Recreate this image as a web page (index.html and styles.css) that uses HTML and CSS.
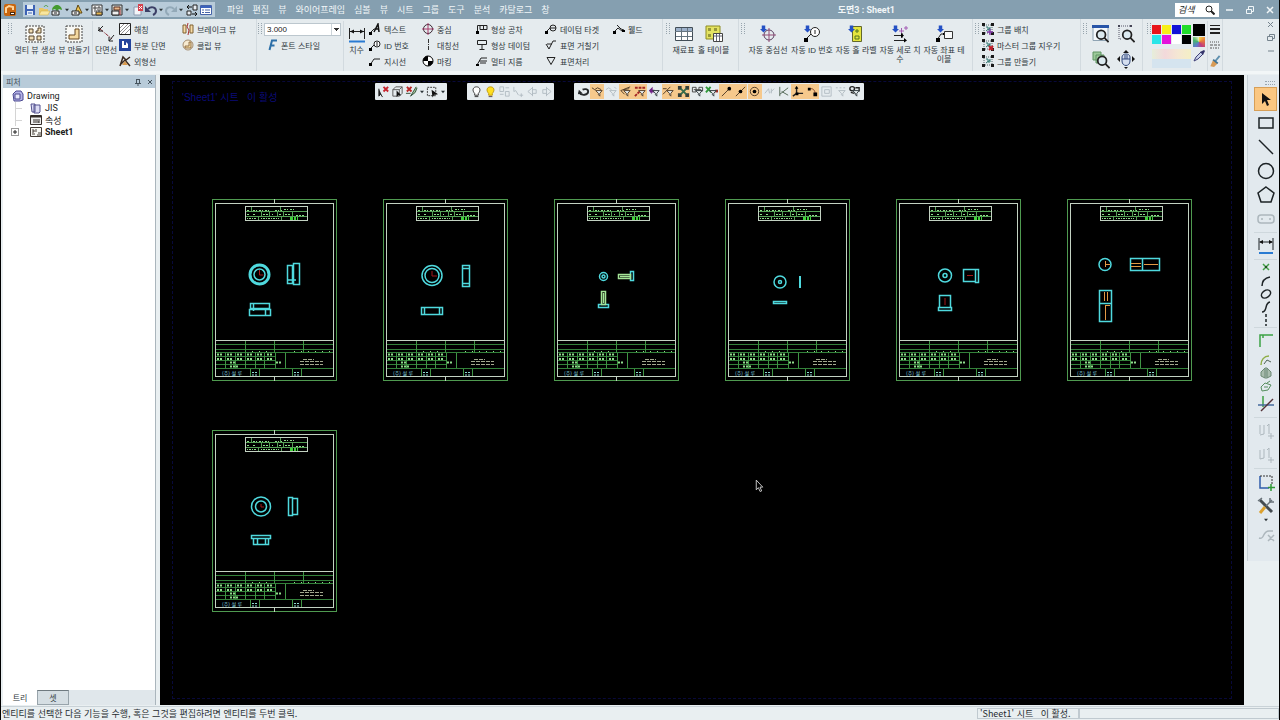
FILE: index.html
```html
<!DOCTYPE html>
<html lang="ko">
<head>
    <meta charset="UTF-8">
    <meta name="viewport" content="width=device-width, initial-scale=1.0">
    <title>도면3 : Sheet1</title>
    <link rel="stylesheet" href="styles.css">
</head>
<body>

<!-- Shared symbols -->
<svg class="defs" aria-hidden="true">
    <symbol id="frame" viewBox="0 0 125 182">
        <g fill="none" stroke="#4f9a50">
            <rect x=".5" y=".5" width="124" height="181"/>
            <path d="M4 145.500H121M4 150.500H121M4 153.500H121M4 157.500H63M4 161.500H63M4 165.500H63M4 169.500H121" stroke="#33813a"/>
            <path d="M33.500 142V154M62.500 142V154M91.500 142V154M13.500 154V169M23.500 154V169M33.500 154V169M43.500 154V169M52.500 154V169M63.500 154V169M73.500 154V169M38.500 170V177M47.500 170V177M80.500 170V177M89.500 170V177" stroke="#3f9444"/>
            <path d="M34 12.500H95M34 17.500H95M39.500 8V12M68.500 8V12M49.500 13V17M57.500 13V17M65.500 13V17M71.500 13V17M80.500 13V17M46.500 18V21M69.500 18V21" stroke="#55a056"/>
        </g>
        <g fill="none" stroke="#c3d2c2">
            <rect x="3.500" y="4.500" width="118" height="173"/>
            <path d="M62.500 0V4M62.500 178V182M4 141.500H121"/>
            <rect x="33.500" y="7.500" width="62" height="14"/>
        </g>
        <g fill="none" stroke="#8fdc8c">
            <path d="M35 11.500H38M41 11.500H57M63 11.500H70M72 10.500H82" stroke-dasharray="2 1 1 2"/>
            <path d="M35 15.500H38M41 15.500H43M51 15.500H56M60 15.500H61M67 15.500H70M73 15.500H79M84 16.500H92" stroke-dasharray="2 1"/>
            <path d="M35 19.500H45M49 19.500H67" stroke-dasharray="1 1 2 1"/>
            <path d="M78 19.500H86" stroke="#3fd03a" stroke-width="3" stroke-dasharray="3 1 2 1"/>
            <path d="M5 155.500H61M5 160H61" stroke-dasharray="2 1 2 5" stroke-width="2"/>
            <path d="M18 163.500H24M18 167.500H26M64 163.500H70" stroke-dasharray="2 1" stroke-width="2"/>
            <path d="M40 152.500H60M82 152.500H118" stroke-dasharray="1 6"/>
            <path d="M91 160.500H102M88 162.500H111M88 165.500H111" stroke="#a2a88e" stroke-dasharray="4 1"/>
            <path d="M40 173.500H45M40 176H45M82 173.500H87M82 176H87" stroke="#8edcd4" stroke-dasharray="2 1"/>
        </g>
    </symbol>
    <symbol id="funnel" viewBox="0 0 14 14"><path d="M5 6h7L9.500 9v3L8 10.500V9z" fill="#e8eef0" stroke="currentColor"/></symbol>
    <symbol id="group" viewBox="0 0 12 12">
        <path d="M2 2h8v8H2z" fill="none" stroke="#55666c" stroke-dasharray="1 1"/>
        <path d="M0 0h3v3H0zM9 0h3v3H9zM0 9h3v3H0zM9 9h3v3H9z" fill="#1a1a1a"/>
        <path d="M4 4h2v3h2V4M4 8l4-3" fill="none" stroke="#2f7670"/>
    </symbol>
    <symbol id="bluearrow" viewBox="0 0 8 8"><path d="M2 0h4v4h2L4 8 0 4h2z" fill="#2450c4"/></symbol>
    <symbol id="lens" viewBox="0 0 16 16"><circle cx="7" cy="7" r="5" fill="#dceaf0" stroke="#222" stroke-width="2"/><path d="M10.500 10.500l5 5" stroke="#222" stroke-width="2"/></symbol>
    <symbol id="caret" viewBox="0 0 5 5"><path d="M0 1h5L2.500 4z" fill="#2c3438"/></symbol>
</svg>

<div class="app">
    <header class="titlebar">
        <svg class="logo" viewBox="0 0 12 12"><rect width="12" height="12" rx="2" fill="#c9660f"/><path d="M2 9V4l3-2 4 1v3" fill="none" stroke="#ffd59a" stroke-width="2"/><path d="M6 8h5v3H6z" fill="#4a2a10"/><path d="M7 9.500h3" stroke="#fff"/></svg>
        <div class="quick">
            <button aria-label="저장"><svg viewBox="0 0 12 12"><path d="M1 1h10v10H1z" fill="#3d62b4"/><path d="M3 1h6v4H3zM3 7h6v4H3z" fill="#e5eef8"/><path d="M4 9h4" stroke="#3d62b4"/></svg></button>
            <button aria-label="열기"><svg viewBox="0 0 12 12"><path d="M1 11V4h4l1 1h4v6z" fill="#e9c766"/><path d="M1 11l2-4h9l-2 4z" fill="#f7e6a0" stroke="#c8a43e" stroke-width=".5"/><path d="M6 3c1-2 3-2 4 0" fill="none" stroke="#4a9c43"/></svg></button>
            <button class="drop" aria-label="파트"><svg viewBox="0 0 12 12"><path d="M1 6c0-3 3-5 5-5s5 2 5 5l-3-1-2 2-2-2z" fill="#459b30"/><path d="M1 7h7v4H1z" fill="#eee" stroke="#222"/><path d="M3 9h3" stroke="#222"/></svg><svg class="caret"><use href="#caret"/></svg></button>
            <button class="drop" aria-label="어셈블리"><svg viewBox="0 0 12 12"><path d="M7 1l4 8H4z" fill="#f1c651" stroke="#5d4510"/><path d="M1 7h7v4H1z" fill="#eee" stroke="#222"/><path d="M3 9h3" stroke="#222"/></svg><svg class="caret"><use href="#caret"/></svg></button>
            <button class="drop" aria-label="도면"><svg viewBox="0 0 12 12"><path d="M1 1h10v10H1z" fill="#f6f6f6" stroke="#333"/><path d="M3 3h2v2H3zM7 3h2v4H7zM3 7h3" fill="none" stroke="#444"/><path d="M5 8h6v3H5z" fill="#e7b64e" stroke="#333"/></svg><svg class="caret"><use href="#caret"/></svg></button>
            <button class="drop" aria-label="시트"><svg viewBox="0 0 12 12"><path d="M1 1h10v10H1z" fill="#cfd4d2" stroke="#333"/><path d="M3 3h6v3H3z" fill="#e8b98a" stroke="#603020"/><path d="M1 7h7v4H1z" fill="#eee" stroke="#222"/><path d="M9 6v5" stroke="#a33"/></svg><svg class="caret"><use href="#caret"/></svg></button>
            <button aria-label="삭제"><svg viewBox="0 0 12 12"><path d="M2 3h7v8H2z" fill="#f2f4f8" stroke="#8c9ab0"/><path d="M6 0h5v7H6z" fill="#d4424e"/><path d="M7 2l3 3M10 2L7 5" stroke="#fff"/></svg></button>
            <button class="drop" aria-label="실행 취소"><svg viewBox="0 0 12 12"><path d="M3 5c3-3 8-2 8 2 0 2-1 3-3 4" fill="none" stroke="#3c3f66" stroke-width="2"/><path d="M0 2v6h6z" fill="#3c3f66"/></svg><svg class="caret"><use href="#caret"/></svg></button>
            <button class="drop" aria-label="다시 실행"><svg viewBox="0 0 12 12"><path d="M9 5C6 2 1 3 1 7c0 2 1 3 3 4" fill="none" stroke="#93a9b8" stroke-width="2"/><path d="M12 2v6H6z" fill="#93a9b8"/></svg><svg class="caret"><use href="#caret"/></svg></button>
            <button aria-label="전환"><svg viewBox="0 0 12 12"><path d="M1 3h5M3 1L1 3l2 2M6 10h5M9 8l2 2-2 2" fill="none" stroke="#111" stroke-width="1"/><path d="M7 1h4v5H7zM1 7h4v4H1z" fill="#e8edf2" stroke="#222"/></svg></button>
            <button aria-label="창 목록"><svg viewBox="0 0 12 12"><path d="M.500 1.500h11v9H.500z" fill="#fff" stroke="#4563a8"/><path d="M1 2h10v2H1z" fill="#3b62bd"/><path d="M2 6h2M5 6h5M2 8.500h2M5 8.500h5" stroke="#4563a8"/></svg></button>
        </div>
        <nav class="menu">
            <a href="#">파일</a><a href="#">편집</a><a href="#">뷰</a><a href="#">와이어프레임</a><a href="#">심볼</a><a href="#">뷰</a><a href="#">시트</a><a href="#">그룹</a><a href="#">도구</a><a href="#">분석</a><a href="#">카탈로그</a><a href="#">창</a>
        </nav>
        <h1 class="title">도면3 : Sheet1</h1>
        <div class="search">
            <input type="text" placeholder="검색" aria-label="검색">
            <svg viewBox="0 0 10 10"><circle cx="4" cy="4" r="3" fill="none" stroke="#222"/><path d="M6 6l3.500 3.500" stroke="#222" stroke-width="2"/></svg>
        </div>
        <div class="wincontrols">
            <button aria-label="최소화"><svg viewBox="0 0 10 10"><path d="M1 5h7" stroke="currentColor" stroke-width="1.500"/></svg></button>
            <button aria-label="이전 크기로"><svg viewBox="0 0 10 10"><path d="M1.500 4.500h5v4h-5zM3.500 4V1.500h5v5H7" fill="none" stroke="currentColor"/></svg></button>
            <button aria-label="닫기"><svg viewBox="0 0 10 10"><path d="M2 2l6 6M8 2L2 8" stroke="currentColor" stroke-width="1.500"/></svg></button>
        </div>
    </header>

    <div class="ribbon">
        <section class="group views">
            <i class="grip"></i>
            <button class="big"><svg viewBox="0 0 20 18"><path d="M1 1h18v16H1z" fill="#f8f8f4" stroke="#444" stroke-dasharray="2 1"/><path d="M4 4h4v4H4zM13 3h3v5h-5V6h2zM4 11h5v4H4zM12 11h4v4h-4z" fill="#f2dfb5" stroke="#54432c"/></svg><span>멀티 뷰 생성</span></button>
            <button class="big"><svg viewBox="0 0 20 18"><path d="M2 1h16v16H2z" fill="#f8f8f4" stroke="#444" stroke-dasharray="2 1"/><path d="M11 4h4v10H5v-4h6z" fill="#f4d9a0" stroke="#6b4a22"/></svg><span>뷰 만들기</span></button>
            <button class="big line"><svg viewBox="0 0 20 18"><path d="M4 4l12 10" stroke="#8a2c35" stroke-dasharray="4 1 1 1"/><path d="M7 1L2 6M3 2v4h4M18 10l-5 6M13 12v4h4" fill="none" stroke="#222"/></svg><span>단면선</span></button>
            <div class="col">
                <button class="row"><svg viewBox="0 0 12 12"><path d="M.500.500h11v11H.500z" fill="#fff" stroke="#222"/><path d="M1 5l4-4M1 9l8-8M2 11l9-9M6 11l5-5" stroke="#666" stroke-width=".7"/></svg>해칭</button>
                <button class="row"><svg viewBox="0 0 12 12"><path d="M0 0h12v12H0z" fill="#23439c"/><path d="M3 2v7h6V5L7 3v3H5V2z" fill="#fff"/></svg>부분 단면</button>
                <button class="row"><svg viewBox="0 0 12 12"><path d="M1 11L4 2l3 3 4-3M2 9l4-4 5 6" fill="none" stroke="#3a2a20" stroke-width="1.500"/><path d="M3 10l3-4 3 4" fill="#d89a4e"/></svg>외형선</button>
            </div>
            <div class="col">
                <button class="row"><svg viewBox="0 0 12 12"><path d="M1 2h3v8H1zM8 2h3v8H8z" fill="#f6dba8" stroke="#7e6030"/><path d="M6 0L5 4l2 3-1 5" fill="none" stroke="#a33"/></svg>브레이크 뷰</button>
                <button class="row"><svg viewBox="0 0 12 12"><circle cx="6" cy="6" r="5" fill="#f7ead0" stroke="#a38c70"/><path d="M7 3h2v6H3V7h4z" fill="#f4d9a0" stroke="#7d5b35" stroke-width=".8"/></svg>클립 뷰</button>
            </div>
        </section>

        <section class="group notes">
            <i class="grip"></i>
            <div class="col fontcol">
                <select aria-label="문자 높이"><option>3.000</option></select>
                <button class="row"><svg viewBox="0 0 12 12"><path d="M3.500 11L6 1.500h5M4.500 6.500h4" fill="none" stroke="#2c6fa8" stroke-width="2"/></svg>폰트 스타일</button>
            </div>
            <button class="big line"><svg viewBox="0 0 18 18"><path d="M1.500 3v11M16.500 3v11M2 6.500h14" stroke="#222"/><path d="M2 6.500l4-2v4zM16 6.500l-4-2v4z" fill="#111"/><path d="M1 16.500h16" stroke="#2a7bd2" stroke-width="2"/></svg><span>치수</span></button>
            <div class="col">
                <button class="row"><svg viewBox="0 0 12 12"><path d="M1 10l4-4h1" fill="none" stroke="#222"/><path d="M0 9h3v3H0z"/><path d="M5 9l4-8 1 8M6 6h4" fill="none" stroke="#111" stroke-width="1.500"/></svg>텍스트</button>
                <button class="row"><svg viewBox="0 0 12 12"><path d="M1 10l4-4" stroke="#222"/><path d="M0 9h3v3H0z"/><circle cx="8" cy="5" r="3" fill="#fff" stroke="#222"/><path d="M8 3v4" stroke="#222"/></svg>ID 번호</button>
                <button class="row"><svg viewBox="0 0 12 12"><path d="M1 10l4-6h6" fill="none" stroke="#222"/><path d="M0 8h3v3H0z"/></svg>지시선</button>
            </div>
            <div class="col">
                <button class="row"><svg viewBox="0 0 12 12"><circle cx="6" cy="6" r="4.500" fill="none" stroke="#3a2531"/><path d="M6 0v12M0 6h12" stroke="#a83b6a"/></svg>중심</button>
                <button class="row"><svg viewBox="0 0 12 12"><path d="M6.500 0v12" stroke="#333" stroke-dasharray="4 1 1 1"/></svg>대칭선</button>
                <button class="row"><svg viewBox="0 0 12 12"><circle cx="6" cy="6" r="5" fill="#fff" stroke="#000"/><path d="M6 1v10a5 5 0 0 0 5-5H1a5 5 0 0 1 5-5"/></svg>마킹</button>
            </div>
            <div class="col">
                <button class="row"><svg viewBox="0 0 12 12"><path d="M1.500 10V2.500H11v4H4v-4M7.500 3v3" fill="none" stroke="#222"/><path d="M0 8h3v3H0z"/></svg>형상 공차</button>
                <button class="row"><svg viewBox="0 0 12 12"><path d="M1.500 1.500h9v4h-9zM6 6v4M3.500 10.500h5" fill="none" stroke="#222"/></svg>형상 데이텀</button>
                <button class="row"><svg viewBox="0 0 12 12"><path d="M1 10l4-7h6M3 6h8M4 8h6" fill="none" stroke="#222"/><path d="M0 9h3v2H0z"/></svg>멀티 지름</button>
            </div>
            <div class="col">
                <button class="row"><svg viewBox="0 0 12 12"><path d="M1 9l4-4h6" fill="none" stroke="#222"/><circle cx="8" cy="5" r="3" fill="none" stroke="#222"/><path d="M0 8h3v3H0z"/></svg>데이텀 타겟</button>
                <button class="row"><svg viewBox="0 0 12 12"><path d="M1 5l3 5 4-8h3M2 5h5" fill="none" stroke="#222"/></svg>표면 거칠기</button>
                <button class="row"><svg viewBox="0 0 12 12"><path d="M2 2.500h8L6 9.500z" fill="none" stroke="#222"/></svg>표면처리</button>
            </div>
            <div class="col">
                <button class="row"><svg viewBox="0 0 12 12"><path d="M1 9l4-4 4 3M4 2l4 4 3 1" fill="none" stroke="#222"/><path d="M0 8h3v3H0zM9 7h3v2H9z"/></svg>웰드</button>
            </div>
        </section>

        <section class="group tables">
            <i class="grip"></i>
            <button class="big"><svg viewBox="0 0 20 18"><path d="M1.500 2.500h17v13h-17z" fill="#fff" stroke="#434e57"/><path d="M2 3h16v3H2z" fill="#9db1ca"/><path d="M1 6.500h18M7.500 3v12M13.500 3v12M2 11.500h16" stroke="#667580"/></svg><span>재료표</span></button>
            <button class="big"><svg viewBox="0 0 20 18"><path d="M2 1h14v13H2z" fill="#e4e362" stroke="#8d8b22"/><path d="M4 3h3v3H4zM10 3h3v3h-3zM4 9h3v3H4z" fill="#98983a"/><path d="M9.500 8.500h9v8h-9z" fill="#fff" stroke="#444"/><path d="M10 11h8M12.500 9v7M15.500 9v7" stroke="#667"/></svg><span>홀 테이블</span></button>
        </section>

        <section class="group auto">
            <i class="grip"></i>
            <button class="big"><svg viewBox="0 0 20 18"><circle cx="11" cy="10" r="5" fill="none" stroke="#5a3d60"/><path d="M11 3v14M4 10h14" stroke="#934a75"/><use href="#bluearrow" x="2" y="0" width="7" height="8"/></svg><span>자동 중심선</span></button>
            <button class="big"><svg viewBox="0 0 20 18"><path d="M3 15l6-6" stroke="#222"/><path d="M2 13h4v4H2z"/><circle cx="13" cy="7" r="4.500" fill="#fff" stroke="#222"/><path d="M13 5v4" stroke="#222"/><use href="#bluearrow" x="2" y="0" width="7" height="8"/></svg><span>자동 ID 번호</span></button>
            <button class="big"><svg viewBox="0 0 20 18"><path d="M6.500 1.500h9v15h-9z" fill="#e5e53e" stroke="#62682c"/><path d="M9 6h4M11 4v4M9 11h4v3H9z" fill="none" stroke="#53751f"/><use href="#bluearrow" x="2" y="0" width="7" height="8"/></svg><span>자동 홀 라벨</span></button>
            <button class="big"><svg viewBox="0 0 20 18"><path d="M4 10.500h8M4 15.500h12M12 8v5" stroke="#222"/><path d="M11 8l3 2.500-3 2.500zM14 13l3 2.500-3 2z"/><path d="M9 6h5M11.500 3v5M14 3h4M16 1v4" stroke="#a35ab4"/><use href="#bluearrow" x="2" y="0" width="7" height="8"/></svg><span>자동 세로 치수</span></button>
            <button class="big"><svg viewBox="0 0 20 18"><path d="M3 15l4-6h3" fill="none" stroke="#222"/><path d="M2 13h4v4H2zM9 8h2v2H9z"/><path d="M10.500 6.500h8v7h-8z" fill="#f8fafa" stroke="#333"/><use href="#bluearrow" x="3" y="0" width="7" height="8"/></svg><span>자동 좌표 테이블</span></button>
        </section>

        <section class="group grouping">
            <i class="grip"></i>
            <div class="col">
                <button class="row"><svg viewBox="0 0 12 12"><use href="#group"/><path d="M8 6v6M5 9h6" stroke="#8238a8" stroke-width="1.500"/></svg>그룹 배치</button>
                <button class="row"><svg viewBox="0 0 12 12"><use href="#group"/><path d="M7 7l4 4M11 7l-4 4" stroke="#c11e2a" stroke-width="2"/></svg>마스터 그룹 지우기</button>
                <button class="row"><svg viewBox="0 0 12 12"><use href="#group"/></svg>그룹 만들기</button>
            </div>
        </section>

        <section class="group zooming">
            <i class="grip"></i>
            <div class="zooms">
                <button aria-label="전체 보기"><svg viewBox="0 0 18 20"><path d="M1 2.500h15v14H1z" fill="#f4f8fb" stroke="#90a4b4"/><path d="M0 1h17v3H0z" fill="#2855a8"/><use href="#lens" x="3" y="4" width="14" height="15"/></svg></button>
                <button aria-label="영역 확대"><svg viewBox="0 0 18 20"><path d="M2 2h12M2 2v13h3" fill="none" stroke="#556" stroke-dasharray="1 1"/><path d="M1 1h2v2H1zM13 1h2v2h-2z" fill="#445"/><use href="#lens" x="4" y="4" width="14" height="15"/></svg></button>
                <button aria-label="선택 확대"><svg viewBox="0 0 18 20"><path d="M1 3h8v8H1zM4 6h8v8H4z" fill="#9cc99a" stroke="#5e9463"/><use href="#lens" x="4" y="5" width="14" height="15"/></svg></button>
                <button aria-label="화면 이동"><svg viewBox="0 0 18 20"><path d="M9 1l3 3H6zM0 10l3-3v6zM18 10l-3-3v6zM9 20l2-2H7z" fill="#151515"/><path d="M5 8c0-4 8-4 8 0v4c0 6-8 6-8 0z" fill="#d4deef" stroke="#31497c"/><path d="M5 10h8M8 6v4M10 6v4" stroke="#31497c"/></svg></button>
            </div>
        </section>

        <section class="group colors">
            <i class="grip"></i>
            <div class="swatches">
                <button class="red" aria-label="빨강"></button><button class="yellow" aria-label="노랑"></button><button class="blue" aria-label="파랑"></button><button class="green" aria-label="초록"></button>
                <button class="cyan" aria-label="하늘"></button><button class="magenta" aria-label="자홍"></button><button class="white" aria-label="흰색"></button><button class="black" aria-label="검정"></button>
                <span class="faded"></span>
            </div>
            <div class="current">
                <button class="black" aria-label="현재 색"></button>
                <button class="spectrum" aria-label="색 선택"></button>
                <button aria-label="색 추출"><svg viewBox="0 0 12 14"><path d="M1 12l2-4 5-5 2 2-5 5z" fill="#c9d3ea" stroke="#3f3f78"/><path d="M7 3l3 3 2-4-1-1z" fill="#35356b"/></svg></button>
            </div>
            <div class="strokes">
                <button aria-label="선 굵기"><svg viewBox="0 0 12 12"><path d="M1 2h10" stroke="#222"/><path d="M1 5.500h10" stroke="#222" stroke-width="2"/><path d="M1 9.500h10" stroke="#222" stroke-width="2"/></svg></button>
                <button aria-label="선 종류"><svg viewBox="0 0 12 12"><path d="M1 2.500h10" stroke="#555" stroke-dasharray="1 1"/><path d="M1 5.500h10" stroke="#555" stroke-dasharray="3 1"/><path d="M1 8.500h10" stroke="#555" stroke-dasharray="2 1 1 1"/></svg></button>
                <button aria-label="서식 복사"><svg viewBox="0 0 12 14"><path d="M11 1L6 7" stroke="#5d8fae" stroke-width="2"/><path d="M4 5l5 4-4 4-4-1z" fill="#d79b56"/><path d="M4 5l5 4" stroke="#3e7396" stroke-width="2"/></svg></button>
            </div>
        </section>

        <div class="mdi">
            <button aria-label="문서 닫기"><svg viewBox="0 0 10 10"><path d="M2 2l5 5M7 2L2 7" stroke="currentColor"/></svg></button>
            <button aria-label="문서 이전 크기로"><svg viewBox="0 0 10 10"><path d="M1.500 3.500h5v4h-5zM3.500 3V1.500h5v4H7" fill="none" stroke="currentColor"/></svg></button>
            <button aria-label="문서 최소화"><svg viewBox="0 0 10 10"><path d="M2 5h6" stroke="currentColor"/></svg></button>
        </div>
    </div>

    <main class="workspace">
        <aside class="panel">
            <div class="panel-head">
                <h2>피처</h2>
                <button aria-label="고정"><svg viewBox="0 0 8 8"><path d="M2.500 1v4M5.500 1v4M1 5.500h6M4 6v2M3 1.500h3" stroke="#46535d" fill="none"/></svg></button>
                <button aria-label="패널 닫기"><svg viewBox="0 0 8 8"><path d="M2 2l4 4M6 2L2 6" stroke="#46535d"/></svg></button>
            </div>
            <ul class="tree">
                <li class="root"><svg viewBox="0 0 12 12"><path d="M1 4l3-3h5l2 3v6l-3 1H2z" fill="#b3b1e4" stroke="#4b4990"/><path d="M3 4h5v5H3z" fill="#e8e8fa" stroke="#4b4990"/></svg>Drawing</li>
                <li class="child"><svg viewBox="0 0 12 12"><path d="M1 2h4v8H2zM4 3h6v7l-1 1H4z" fill="#dcdcf4" stroke="#53518e"/></svg>JIS</li>
                <li class="child"><svg viewBox="0 0 12 12"><path d="M.500 1.500h11v9H.500z" fill="#eee" stroke="#332c28"/><path d="M1 2.500h10" stroke="#332c28" stroke-width="2"/><path d="M3 6h5M3 8h6M9 5v4" stroke="#332c28"/></svg>속성</li>
                <li class="sheet"><button class="expand" aria-label="펼치기"><svg viewBox="0 0 6 6"><path d="M1 3h4M3 1v4" stroke="#222"/></svg></button><svg viewBox="0 0 12 12"><path d="M.500 1.500h11v9H.500z" fill="#f8f8f4" stroke="#443c36"/><path d="M2 4h2v2H2M6 3v3M2 8h3M7 9h4M8 7h3" fill="none" stroke="#443c36"/></svg>Sheet1</li>
            </ul>
            <div class="tabs"><button class="active">트리</button><button>셋</button></div>
        </aside>

        <section class="canvas">
            <p class="sheet-note">'Sheet1' 시트 &nbsp; 이 활성</p>
            <div class="floating">
                <div class="float">
                    <button aria-label="선택 해제"><svg viewBox="0 0 14 14"><path d="M2 4v8l2-2 2 3" fill="#222" stroke="#222"/><path d="M7 2l5 5M12 2L7 7" stroke="#c7242e" stroke-width="2"/></svg></button>
                    <button aria-label="솔리드"><svg viewBox="0 0 14 14"><path d="M2 5h7v7H2zM2 5l3-3h7v7l-3 3M9 5l3-3" fill="none" stroke="#555"/><path d="M6 6l5 5H8l-2 2z" fill="#111"/></svg></button>
                    <button class="drop" aria-label="선택 필터"><svg viewBox="0 0 14 14"><path d="M2 2l5 5M7 2L2 7" stroke="#b82525" stroke-width="2"/><path d="M12 2L6 12l5-4 2-5M1 9h5" fill="#a9c89e" stroke="#304e38"/></svg><svg class="caret"><use href="#caret"/></svg></button>
                    <button class="drop" aria-label="영역 선택"><svg viewBox="0 0 14 14"><path d="M1.500 2.500h9v9h-9z" fill="none" stroke="#333" stroke-dasharray="2 1"/><path d="M6 5l7 5-4 .500-2 3z" fill="#111"/></svg><svg class="caret"><use href="#caret"/></svg></button>
                </div>
                <div class="float lights">
                    <button aria-label="숨기기"><svg viewBox="0 0 14 14"><path d="M5 9C2 6 3 2 7 2s5 4 2 7v2H5z" fill="#fff" stroke="#333"/><path d="M5 12.500h4" stroke="#333"/></svg></button>
                    <button aria-label="표시"><svg viewBox="0 0 14 14"><path d="M5 9C2 6 3 2 7 2s5 4 2 7v2H5z" fill="#ffdf20" stroke="#bc9710"/><path d="M5 12.500h4" stroke="#544"/></svg></button>
                    <button class="off" aria-label="전환 표시"><svg viewBox="0 0 14 14"><path d="M2 2h4v5H2zM8 7h4v5H8zM8 3h4M2 10h4" fill="none" stroke="currentColor"/></svg></button>
                    <button class="off" aria-label="이동"><svg viewBox="0 0 14 14"><path d="M2 2v5l2-1 3 5M8 11h4M10 9v4" fill="none" stroke="currentColor"/></svg></button>
                    <button class="off" aria-label="이전"><svg viewBox="0 0 14 14"><path d="M2 7l5-4v2h4v4H7v2zM7 2v10" fill="none" stroke="currentColor"/></svg></button>
                    <button class="off" aria-label="다음"><svg viewBox="0 0 14 14"><path d="M12 7L7 3v2H3v4h4v2zM7 2v10" fill="none" stroke="currentColor"/></svg></button>
                </div>
                <div class="float snaps">
                    <button aria-label="복귀"><svg viewBox="0 0 14 14"><path d="M2 8c3 4 10 3 10-1 0-3-4-3-6-2" fill="none" stroke="#25282b" stroke-width="2"/><path d="M1 10l1-5 4 4z" fill="#25282b"/></svg></button>
                    <button class="on" aria-label="필터 1"><svg viewBox="0 0 14 14"><path d="M1 3l3 2 3-2 4 2" fill="none" stroke="currentColor"/><use href="#funnel"/></svg></button>
                    <button class="off" aria-label="필터 2"><svg viewBox="0 0 14 14"><path d="M1 5l3-2 3 2M10 2l2 2" fill="none" stroke="currentColor"/><use href="#funnel"/></svg></button>
                    <button class="on" aria-label="필터 3"><svg viewBox="0 0 14 14"><path d="M12 2L2 6l4 4M5 5l6-1" fill="none" stroke="currentColor"/><use href="#funnel"/></svg></button>
                    <button class="on" aria-label="필터 4"><svg viewBox="0 0 14 14"><path d="M1 3h11M1 12l5-5" stroke="#a32525" stroke-dasharray="3 1" stroke-width="2"/><use href="#funnel"/></svg></button>
                    <button aria-label="필터 5"><svg viewBox="0 0 14 14"><path d="M1 6l4-4v3h2v3H4v2z" fill="#6e2385"/><use href="#funnel"/></svg></button>
                    <button class="on" aria-label="필터 6"><svg viewBox="0 0 14 14"><path d="M1 10L9 2M1 4h4" stroke="currentColor"/><use href="#funnel"/></svg></button>
                    <button class="on" aria-label="필터 7"><svg viewBox="0 0 14 14"><path d="M1 1h4v4H1zM9 1h4v4H9zM1 9h4v4H1zM9 9h4v4H9z" fill="#384039"/><path d="M4 4l6 6M10 4l-6 6" stroke="#366b4a" stroke-width="2"/></svg></button>
                    <button aria-label="필터 8"><svg viewBox="0 0 14 14"><path d="M1.500 2.500h4v5h-4zM8.500 2.500h4v4h-4zM3 5h8" fill="none" stroke="#444"/><use href="#funnel"/></svg></button>
                    <button aria-label="필터 9"><svg viewBox="0 0 14 14"><path d="M1 2l6 6M6 2L1 8" stroke="#2e9838" stroke-width="2"/><path d="M11 5h3v3h-3z" fill="#a0302a"/><use href="#funnel"/></svg></button>
                    <button class="on" aria-label="끝점"><svg viewBox="0 0 14 14"><path d="M2 12L10 4" stroke="currentColor"/><circle cx="10" cy="4" r="2"/></svg></button>
                    <button class="on" aria-label="중간점"><svg viewBox="0 0 14 14"><path d="M2 12L12 2" stroke="currentColor"/><circle cx="7" cy="7" r="2"/></svg></button>
                    <button class="on" aria-label="중심점"><svg viewBox="0 0 14 14"><circle cx="7" cy="7" r="4.500" fill="none" stroke="currentColor"/><circle cx="7" cy="7" r="2"/></svg></button>
                    <button class="off" aria-label="교점"><svg viewBox="0 0 14 14"><path d="M2 9l4-5 1 5M8 8l4-4M9 4v5" fill="none" stroke="currentColor"/></svg></button>
                    <button aria-label="접점"><svg viewBox="0 0 14 14"><path d="M3 2v10M3 10l9-7M5 7l7 4" fill="none" stroke="#4e6351"/></svg></button>
                    <button class="on" aria-label="좌표축"><svg viewBox="0 0 14 14"><path d="M6 2v7h7M6 9l-4 3" fill="none" stroke="#222" stroke-width="1.500"/><path d="M4 4l2-3 2 3zM5 8h3v3H5z"/></svg></button>
                    <button class="on" aria-label="점 스냅"><svg viewBox="0 0 14 14"><path d="M3 5c4-3 7 1 7 5" fill="none" stroke="#7c3920"/><path d="M2 3h3v3H2zM8 8h4v4H8z"/></svg></button>
                    <button class="off" aria-label="면"><svg viewBox="0 0 14 14"><path d="M2 2h10v10H2zM5 5h5v4H5z" fill="none" stroke="currentColor"/></svg></button>
                    <button class="off" aria-label="필터 10"><svg viewBox="0 0 14 14"><path d="M2 3h2M6 3h2M10 3h2" stroke="currentColor"/><use href="#funnel"/></svg></button>
                    <button aria-label="필터 설정"><svg viewBox="0 0 14 14"><path d="M2 4c0-3 5-3 5 0S2 7 2 4M8 3h4v4M3 8l4 1" fill="none" stroke="#222" stroke-width="1.500"/><use href="#funnel"/></svg></button>
                </div>
            </div>

            <div class="sheets">
                <svg class="drawing" viewBox="0 0 125 182"><use href="#frame"/><text x="10" y="176">(주) 설 루</text>
                    <g class="part"><circle cx="47.500" cy="75.500" r="9.500" stroke-width="3"/><circle cx="47.500" cy="75.500" r="5.500"/><path d="M75.500 66.500h5v18h-5zM81.500 64.500h6v21h-6zM38.500 104.500h19v5h-19zM37.500 110.500h21v6h-21zM41.500 105v7M53.500 110v6M76 81h8"/></g>
                    <path class="axis" d="M47.500 71v5h4"/>
                </svg>
                <svg class="drawing" viewBox="0 0 125 182"><use href="#frame"/><text x="10" y="176">(주) 설 루</text>
                    <g class="part"><circle cx="49" cy="76.500" r="10"/><circle cx="49" cy="76.500" r="7"/><path d="M79.500 66.500h7v21h-7zM80 69.500h6M80 84.500h6M38.500 108.500h21v7h-21zM41.500 109v6M56.500 109v6"/></g>
                    <path class="axis" d="M49 72v5h5"/>
                </svg>
                <svg class="drawing" viewBox="0 0 125 182"><use href="#frame"/><text x="10" y="176">(주) 설 루</text>
                    <g class="part"><circle cx="49.500" cy="77.500" r="4"/><circle cx="49.500" cy="77.500" r="1.500"/><path d="M76.500 72.500h3v9h-3zM44.500 105.500h10v3h-10z"/><path d="M64.500 75.500h12v4h-12zM47.500 92.500h4v13h-4zM66 77.500h10M49.500 94v10" stroke="#a4e497"/></g>
                </svg>
                <svg class="drawing" viewBox="0 0 125 182"><use href="#frame"/><text x="10" y="176">(주) 설 루</text>
                    <g class="part"><circle cx="55" cy="83" r="6"/><circle cx="55" cy="83" r="1.500"/><path d="M75 77v12" stroke-width="2"/><path d="M48.500 102.500h13v2h-13z"/></g>
                </svg>
                <svg class="drawing" viewBox="0 0 125 182"><use href="#frame"/><text x="10" y="176">(주) 설 루</text>
                    <g class="part"><circle cx="49" cy="76.500" r="6.500"/><circle cx="49" cy="76.500" r="2"/><path d="M67.500 70.500h12v12h-12zM79.500 70.500h3v13h-3zM43.500 96.500h11v12h-11zM42.500 108.500h13v3h-13z"/></g>
                    <path class="axis" d="M71 76.500h6M49 99v7"/>
                </svg>
                <svg class="drawing" viewBox="0 0 125 182"><use href="#frame"/><text x="10" y="176">(주) 설 루</text>
                    <g class="part"><circle cx="38" cy="65.500" r="6"/><path d="M63.500 59.500h29v12h-29zM75.500 60v12M32.500 91.500h12v31h-12zM33 104.500h11"/></g>
                    <path class="core" d="M38.500 62v6M38 65.500h5M64 64.500h10M64 67.500h10M77 65.500h14M37.500 93v9M40.500 93v9M38.500 107v14M38 106.500h5"/>
                </svg>
                <svg class="drawing" viewBox="0 0 125 182"><use href="#frame"/><text x="10" y="176">(주) 설 루</text>
                    <g class="part"><circle cx="49" cy="76.500" r="9.500"/><circle cx="49" cy="76.500" r="5.500"/><path d="M76.500 67.500h4v18h-4zM80.500 68.500h5v16h-5zM39.500 105.500h19v3h-19zM41.500 108.500h15v6h-15zM45.500 109v5M53.500 109v5"/></g>
                    <path class="axis" d="M49 74v3h3"/>
                </svg>
            </div>
            <svg class="cursor" viewBox="0 0 8 12"><path d="M1 1v9l2-2 1.500 3.500 1.500-.500-1.500-3.500H7z" fill="#000" stroke="#ddd" stroke-width=".8"/></svg>
        </section>

        <aside class="tools">
            <div class="tools-head"><span></span></div>
            <button class="on" aria-label="선택"><svg viewBox="0 0 18 18"><path d="M5 3v11l3-3 2 5 2-1-2-5h4z" fill="#111" stroke="none"/></svg></button>
            <button aria-label="사각형"><svg viewBox="0 0 18 18"><path d="M2 4h14v10H2z"/></svg></button>
            <button aria-label="선"><svg viewBox="0 0 18 18"><path d="M2 2l14 14"/></svg></button>
            <button aria-label="원"><svg viewBox="0 0 18 18"><circle cx="9" cy="9" r="7.500"/></svg></button>
            <button aria-label="다각형"><svg viewBox="0 0 18 18"><path d="M9 1l8 6-3 9H4L1 7z"/></svg></button>
            <button class="off" aria-label="슬롯"><svg viewBox="0 0 18 18"><rect x="1" y="5" width="16" height="8" rx="3"/><path d="M4 9h2M12 9h2"/></svg></button>
            <hr>
            <button aria-label="치수"><svg viewBox="0 0 18 18"><path d="M2 1v12M16 1v12M3 5h12" stroke-width="1"/><path d="M2 5l4-2v4zM16 5l-4-2v4z" fill="#111" stroke="none"/><path d="M2 16h14" stroke="#2a7bd2" stroke-width="2"/></svg></button>
            <hr>
            <button class="small" aria-label="점"><svg viewBox="0 0 18 12"><path d="M6 2l6 6M12 2L6 8" stroke="#43a047"/><path d="M8 4h2v2H8z" fill="#284e29" stroke="none"/></svg></button>
            <button class="small" aria-label="호"><svg viewBox="0 0 18 12"><path d="M5 11c0-5 3-8 8-9"/></svg></button>
            <button class="small" aria-label="타원"><svg viewBox="0 0 18 12"><ellipse cx="9" cy="6" rx="5" ry="3.500" transform="rotate(-35 9 6)"/></svg></button>
            <button class="small" aria-label="스플라인"><svg viewBox="0 0 18 12"><path d="M5 11c6 0 2-9 8-10"/></svg></button>
            <button class="small" aria-label="중심선"><svg viewBox="0 0 18 12"><path d="M9 0v12" stroke-dasharray="3 2"/></svg></button>
            <hr>
            <button aria-label="모서리"><svg viewBox="0 0 18 18"><path d="M3 15V3h13M6 6v-3" stroke="#3da345"/></svg></button>
            <button class="small" aria-label="필렛"><svg viewBox="0 0 18 12"><path d="M4 11c0-5 3-9 8-9" stroke="#8fae48"/><path d="M7 10l3-4 4 2" stroke="#4e6255" stroke-width="1"/></svg></button>
            <button class="small" aria-label="대칭"><svg viewBox="0 0 18 12"><path d="M8 1L4 5v4l4 2zM10 1l4 4v4l-4 2zM9 0v12" fill="#a9bcae" stroke="#6d8a75" stroke-width="1"/></svg></button>
            <button class="small" aria-label="회전"><svg viewBox="0 0 18 12"><path d="M4 7l4-4 6 2-3 5-6 1zM10 3l3-2M7 7h4" fill="none" stroke="#578e5f" stroke-width="1"/></svg></button>
            <button aria-label="축"><svg viewBox="0 0 18 18"><path d="M6 1v11" stroke="#3c9e42"/><path d="M1 10h16" stroke="#456a9d"/><path d="M4 16L16 4" stroke="#543338"/></svg></button>
            <hr>
            <button class="off" aria-label="복사"><svg viewBox="0 0 18 18"><path d="M3 3v9M7 3v9l-4 1M12 2v10M10 4l2-2M14 11v6M11 14h6" stroke-width="1"/></svg></button>
            <button class="off" aria-label="배열"><svg viewBox="0 0 18 18"><path d="M3 4v9M7 3v9l-4 1M12 2v10M10 4l2-2M14 11v6M11 14h6" stroke-width="1"/></svg></button>
            <hr>
            <button aria-label="프레임 추가"><svg viewBox="0 0 18 18"><path d="M3 3v12h9" stroke="#305cab"/><path d="M3 3h12v9" stroke="#333" stroke-dasharray="2 1" stroke-width="1"/><path d="M14 11v7M11 14.500h7" stroke="#2f9a37"/></svg></button>
            <button aria-label="도구"><svg viewBox="0 0 18 18"><path d="M3 3l12 12" stroke="#444b50" stroke-width="3"/><path d="M15 3L9 9" stroke="#687279"/><path d="M8 10l-5 6" stroke="#dca12f" stroke-width="3"/><path d="M1 4l4-3M13 1v4h4" stroke="#687279"/></svg></button>
            <svg class="caret more"><use href="#caret"/></svg>
            <button class="off" aria-label="곡선 삭제"><svg viewBox="0 0 18 18"><path d="M2 13c6 2 3-7 10-7h4M11 10l6 6M17 10l-6 6"/></svg></button>
        </aside>
    </main>

    <footer class="status">
        <span class="hint">엔티티를 선택한 다음 기능을 수행, 혹은 그것을 편집하려면 엔티티를 두번 클릭.</span>
        <span class="cell">'Sheet1' 시트 &nbsp; 이 활성.</span>
        <span class="cell rest"></span>
    </footer>
</div>

</body>
</html>
```

FILE: styles.css
```css
* {
    box-sizing: border-box;
}

body {
    margin: 0;
    font-family: "Liberation Sans", "Noto Sans CJK KR", sans-serif;
    font-size: 9px;
    color: #2f383d;
    background: #e9eff1;
}

button {
    display: flex;
    align-items: center;
    justify-content: center;
    padding: 0;
    border: none;
    background: none;
    color: inherit;
    font: inherit;
    cursor: pointer;
}

svg {
    display: block;
    flex: none;
}

h1, h2, p, ul {
    margin: 0;
    padding: 0;
    font-size: 9px;
}

.defs {
    position: absolute;
    width: 0;
    height: 0;
}

.app {
    display: flex;
    flex-direction: column;
    height: 100vh;
    border-left: 1px solid #000;
    border-right: 1px solid #000;
    overflow: hidden;
}

.caret {
    width: 4px;
    height: 4px;
}

/* Title bar */
.titlebar {
    display: flex;
    align-items: center;
    height: 19px;
    flex: none;
    background: #859fb0;
    color: #f1f6f8;
}

.logo {
    width: 12px;
    height: 12px;
    margin: 0 7px 0 3px;
}

.quick {
    display: flex;
    align-items: center;
    height: 15px;
    width: 192px;
    background: #b8cbd9;
}

.quick button {
    width: 13px;
    height: 15px;
    margin-right: 1px;
}

.quick .drop {
    width: 18px;
    gap: 2px;
    margin-right: 2px;
}

.quick svg:first-child {
    width: 12px;
    height: 12px;
}

.menu {
    display: flex;
    gap: 9px;
    margin-left: 12px;
}

.menu a {
    color: inherit;
    text-decoration: none;
    white-space: nowrap;
}

.title {
    flex: 1;
    padding-left: 8px;
    text-align: center;
    font-family: Roboto, "Noto Sans CJK KR", sans-serif;
    font-weight: bold;
}

.search {
    display: flex;
    align-items: center;
    width: 44px;
    height: 14px;
    padding: 0 4px 0 3px;
    background: #fff;
}

.search input {
    width: 26px;
    padding: 0;
    border: none;
    outline: none;
    font: italic 9px "Noto Sans CJK KR", sans-serif;
}

.search input::placeholder {
    color: #222;
}

.search svg {
    width: 10px;
    height: 10px;
    margin-left: auto;
}

.wincontrols {
    display: flex;
    gap: 10px;
    margin: 0 4px 0 6px;
}

.wincontrols svg {
    width: 10px;
    height: 10px;
}

/* Ribbon */
.ribbon {
    display: flex;
    flex: none;
    height: 55px;
    padding-left: 4px;
    background: #e5ebee;
    border-bottom: 3px solid #f2f6f7;
    font-size: 8px;
}

.group {
    display: grid;
    border-right: 1px solid #d2dadf;
    padding-top: 2px;
}

.grip {
    width: 4px;
    height: 11px;
    margin-top: 2px;
    border-left: 1px dotted #98a5ae;
    border-right: 1px dotted #98a5ae;
}

.views {
    padding-left: 3px;
    grid-template-columns: 6px 42px 36px 27px 63px 74px;
}

.notes {
    padding-left: 1px;
    grid-template-columns: 6px 79px 26px 53px 54px 69px 68px 49px;
}

.tables {
    padding-left: 3px;
    grid-template-columns: 4px 27px 41px;
}

.tables .big:last-child {
    margin-right: 8px;
}

.auto {
    padding-left: 2px;
    grid-template-columns: 5px repeat(5, 44px) 6px;
}

.grouping {
    padding-left: 2px;
    grid-template-columns: 7px 98px;
}

.zooming {
    padding-left: 2px;
    grid-template-columns: 5px 54px;
}

.colors {
    padding-left: 4px;
    grid-template-columns: 5px 41px 14px 15px;
}

.big {
    flex-direction: column;
    justify-content: flex-start;
    padding-top: 4px;
    line-height: 9px;
    text-align: center;
}

.big svg {
    width: 20px;
    height: 18px;
    margin-bottom: 3px;
}

.big span {
    white-space: nowrap;
}

.auto .big span {
    white-space: normal;
    width: 44px;
}

.line {
    border-left: 1px solid #d2dadf;
}

.col {
    display: grid;
    grid-template-rows: repeat(3, 16px);
    align-content: start;
}

.row {
    justify-content: flex-start;
    gap: 3px;
    white-space: nowrap;
}

.row svg {
    width: 12px;
    height: 12px;
}

/* combo box with its own small arrow */
.fontcol select {
    appearance: none;
    width: 77px;
    height: 13px;
    margin-top: 2px;
    padding: 0 0 0 2px;
    border: 1px solid #bcc7ce;
    border-radius: 0;
    background: conic-gradient(from -45deg at 50% 100%, #333 90deg, transparent 0) 70px 5px / 4px 2px no-repeat,
                linear-gradient(#ccd4d9, #ccd4d9) 66px 0 / 1px 13px no-repeat,
                #fff;
    background: linear-gradient(#333, #333) 69px 4px / 5px 1px no-repeat,
                linear-gradient(#333, #333) 70px 5px / 3px 1px no-repeat,
                linear-gradient(#333, #333) 71px 6px / 1px 1px no-repeat,
                linear-gradient(#ccd4d9, #ccd4d9) 66px 0 / 1px 13px no-repeat,
                #fff;
    font: 8px "Liberation Sans", sans-serif;
    color: #222;
}

.fontcol .row {
    padding-left: 2px;
}

.zooms {
    display: grid;
    grid-template-columns: 25px 25px;
    grid-template-rows: 25px 25px;
}

.zooms svg {
    width: 18px;
    height: 20px;
}

.swatches {
    display: grid;
    grid-template-columns: repeat(4, 9px);
    grid-auto-rows: 9px;
    gap: 1px;
    align-content: start;
    padding-top: 4px;
}

.red { background: #e8151b; }
.yellow { background: #f7ee17; }
.blue { background: #1212d8; }
.green { background: #22dd2b; }
.cyan { background: #29e5e8; }
.magenta { background: #e313dc; }
.white { background: #fff; }
.black { background: #000; }

.faded {
    grid-column: 1 / 5;
    height: 19px;
    margin-top: 4px;
    background: linear-gradient(90deg, #e6eeda, #f3d9db, #f5e7d3, #f4efc5);
    border-bottom: 9px solid #d5e4ef;
}

.current {
    display: grid;
    grid-template-rows: 12px 10px 16px;
    gap: 1px;
    align-content: start;
    width: 12px;
    padding-top: 3px;
}

.spectrum {
    background: conic-gradient(#f6e04e, #e87b3c, #c23c7c, #5e7bd0, #45b66a, #f6f1c2);
}

.current svg {
    width: 12px;
    height: 14px;
}

.strokes {
    display: grid;
    grid-template-rows: repeat(3, 16px);
    align-content: start;
    border-left: 1px solid #d2dadf;
}

.strokes svg {
    width: 12px;
    height: 13px;
}

.mdi {
    display: flex;
    flex-direction: column;
    gap: 3px;
    margin: 1px 3px 0 auto;
    color: #75838d;
}

.mdi svg {
    width: 10px;
    height: 10px;
}

/* Workspace */
.workspace {
    display: flex;
    flex: 1;
    min-height: 0;
    padding: 1px 0 1px 2px;
}

.panel {
    display: flex;
    flex-direction: column;
    width: 153px;
    margin-right: 4px;
    border-right: 1px solid #aab5bc;
    background: #fff;
}

.panel-head {
    display: flex;
    align-items: center;
    gap: 4px;
    height: 13px;
    padding: 0 1px 0 3px;
    background: #b8cbd9;
    color: #45525c;
}

.panel-head h2 {
    flex: 1;
    font-size: 8px;
    font-weight: normal;
}

.panel-head svg {
    width: 8px;
    height: 8px;
}

.tree {
    flex: 1;
    padding-top: 2px;
    list-style: none;
    font-family: Roboto, "Noto Sans CJK KR", sans-serif;
    color: #222;
}

.tree li {
    display: flex;
    align-items: center;
    gap: 3px;
    height: 12px;
}

.tree svg {
    width: 12px;
    height: 12px;
}

.tree .root {
    padding-left: 9px;
}

.tree .child {
    padding-left: 12px;
}

.tree .child::before {
    content: "";
    width: 12px;
    height: 12px;
    background: linear-gradient(#d4d4d4, #d4d4d4) 0 0 / 1px 12px no-repeat,
                linear-gradient(#d4d4d4, #d4d4d4) 0 6px / 7px 1px no-repeat;
}

.tree .sheet {
    padding-left: 8px;
    font-weight: bold;
}

.tree .expand {
    width: 8px;
    height: 8px;
    margin-right: 8px;
    border: 1px solid #999;
    background: #fff;
}

.tree .expand svg {
    width: 6px;
    height: 6px;
}

.tabs {
    display: flex;
    height: 15px;
    background: #e0e7eb;
}

.tabs button {
    width: 32px;
    border: 1px solid #98a4ab;
    border-top-color: #6f7a80;
    background: #d5dee3;
    font-size: 8px;
}

.tabs .active {
    width: 34px;
    border-color: #fff;
    background: #fff;
}

.canvas {
    position: relative;
    flex: 1;
    min-width: 0;
    overflow: hidden;
    background: #000;
}

/* dashed sheet boundary */
.canvas::before {
    content: "";
    position: absolute;
    inset: 6px 12px;
    border: 1px dashed #08083a;
}

.sheet-note {
    position: absolute;
    left: 22px;
    top: 14px;
    font-size: 10px;
    color: #0b0b78;
}

.floating {
    position: absolute;
    top: 8px;
    left: 215px;
    display: flex;
    gap: 20px;
}

.float {
    display: flex;
    align-items: center;
    height: 17px;
    padding: 0 1px;
    border-radius: 1px;
    background: #e6ecef;
}

.float button {
    width: 14px;
    height: 15px;
}

.float svg:first-child {
    width: 13px;
    height: 13px;
}

.float .drop {
    width: 21px;
    gap: 2px;
}

.lights {
    padding: 0 1px 0 2px;
}

.snaps {
    width: 290px;
    padding: 0 2px;
    justify-content: space-between;
}

.float .on {
    background: #f6c98c;
    color: #4f3a26;
}

.float .off {
    color: #b2bcc2;
}

.sheets {
    display: grid;
    grid-template-columns: repeat(auto-fill, 125px);
    gap: 49px 46px;
    padding: 124px 46px 0 52px;
}

.drawing {
    width: 125px;
    height: 182px;
}

.drawing text {
    fill: #86dde4;
    font-family: "Noto Sans CJK KR", sans-serif;
    font-size: 5px;
}

.part {
    fill: none;
    stroke: #4fd9de;
    stroke-width: 1.5;
}

.axis {
    fill: none;
    stroke: #a3181c;
}

.core {
    fill: none;
    stroke: #e39a45;
}

.cursor {
    position: absolute;
    left: 595px;
    top: 404px;
    width: 9px;
    height: 13px;
}

/* Right toolbar */
.tools {
    display: flex;
    flex-direction: column;
    align-items: center;
    align-self: flex-start;
    width: 32px;
    height: 486px;
    margin-left: 3px;
    padding-left: 4px;
    background: #e2e9ee;
    border-left: 1px solid #c6d0d6;
}

.tools-head {
    display: flex;
    justify-content: flex-end;
    align-self: stretch;
    height: 12px;
    flex: none;
    padding: 6px 4px 0 0;
}

.tools-head span {
    width: 10px;
    height: 4px;
    border-top: 1px dotted #98a5ae;
    border-bottom: 1px dotted #98a5ae;
}

.tools button {
    width: 23px;
    height: 24px;
    flex: none;
    color: #1d2326;
}

.tools button svg {
    width: 18px;
    height: 18px;
    fill: none;
    stroke: currentColor;
    stroke-width: 1.5;
}

.tools .small {
    height: 13px;
}

.tools .small svg {
    height: 12px;
}

.tools .on {
    background: #fbc781;
    border: 1px solid #d79f57;
}

.tools .off {
    color: #adb7bd;
}

.tools hr {
    width: 23px;
    margin: 1px 0;
    border: none;
    border-top: 1px solid #cfd8dd;
    flex: none;
}

/* Status bar */
.status {
    display: flex;
    align-items: center;
    height: 14px;
    flex: none;
    border-top: 1px solid #c9d2d7;
    background: #e9eff1;
    color: #262c30;
    font-family: "Noto Sans CJK KR", sans-serif;
}

.hint {
    flex: 1;
    padding-left: 1px;
    line-height: 12px;
}

.cell {
    width: 102px;
    height: 11px;
    padding-left: 2px;
    border: 1px solid #c0cad0;
    line-height: 9px;
}

.rest {
    width: 200px;
}
```
